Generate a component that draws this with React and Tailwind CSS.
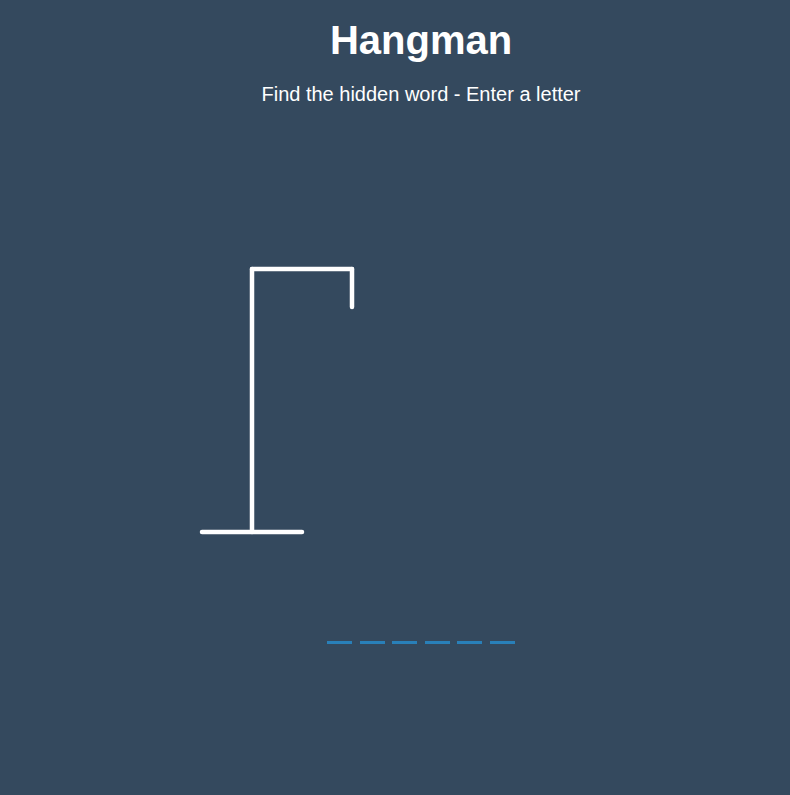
export default function App() {
  const letters = ["", "", "", "", "", ""];
  return (
    <div
      className="min-h-[795px] w-full overflow-hidden bg-[#34495e] text-white"
      style={{ fontFamily: '"Liberation Sans", Arial, sans-serif' }}
    >
      <div className="flex flex-col items-center pl-[52px]">
        <h1 className="mt-[18px] text-[40px] font-bold leading-[45px]">Hangman</h1>
        <p className="mt-[20px] text-[20px] leading-[23px]">
          Find the hidden word - Enter a letter
        </p>

        <div className="mt-[138px] flex w-[562px] flex-col">
          {/* gallows */}
          <svg
            width="250"
            height="313"
            className="ml-[37px] fill-none stroke-white"
            strokeWidth="4.5"
            strokeLinecap="round"
          >
            <line x1="75" y1="25" x2="175" y2="25" />
            <line x1="175" y1="25" x2="175" y2="63" />
            <line x1="75" y1="25" x2="75" y2="288" />
            <line x1="25" y1="288" x2="125" y2="288" />
          </svg>

          {/* hidden word */}
          <div className="mt-[37px] flex justify-center gap-[7.5px]">
            {letters.map((l, i) => (
              <span
                key={i}
                className="inline-flex h-[50px] w-[25px] items-center justify-center border-b-[3px] border-[#2980b9] text-[30px]"
              >
                {l}
              </span>
            ))}
          </div>
        </div>
      </div>
    </div>
  );
}
